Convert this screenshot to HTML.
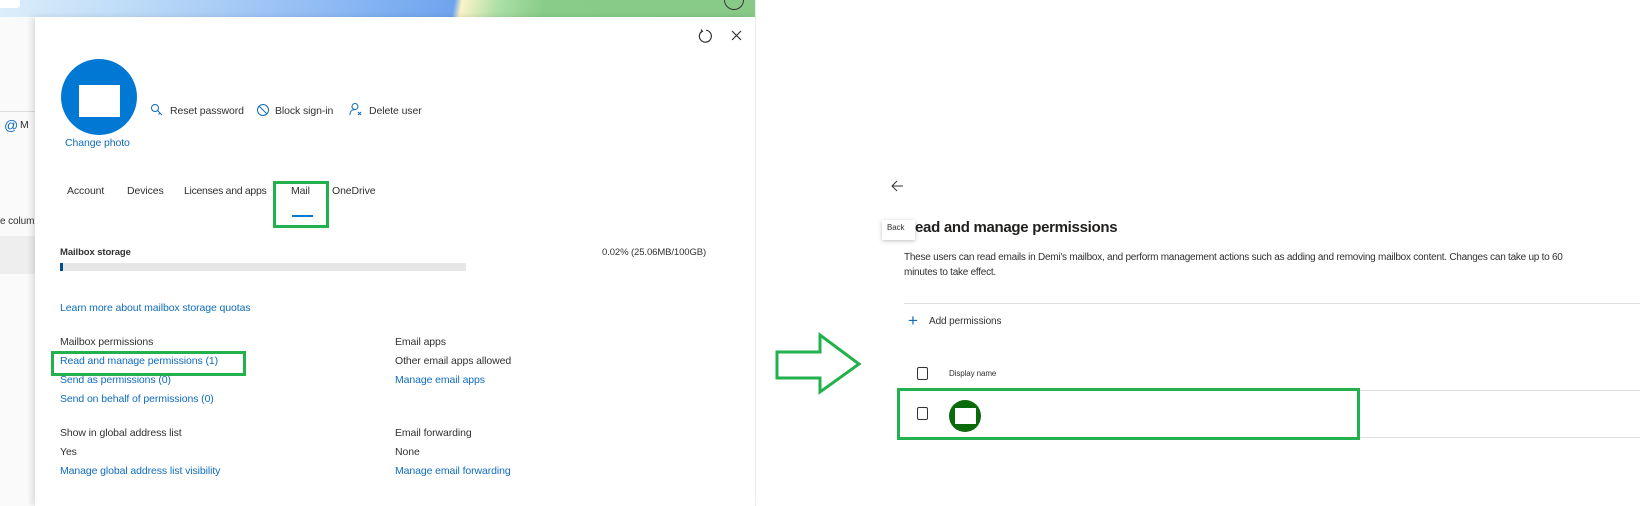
<!DOCTYPE html>
<html><head><meta charset="utf-8"><style>
*{margin:0;padding:0;box-sizing:border-box}
body{width:1640px;height:506px;background:#fff;position:relative;overflow:hidden;font-family:"Liberation Sans",sans-serif;color:#323130;font-size:10.5px;letter-spacing:-0.1px}
.a{position:absolute;white-space:nowrap}
.l{color:#0f6cbd}
.g{border:3px solid #22b14c;position:absolute}
</style></head><body>
<div class="a" style="left:0;top:0;width:755px;height:17px;background:linear-gradient(100deg,#dceefa 0%,#b9d8f7 20%,#8cb8f3 45%,#6ea4ee 60%,#fbf3c8 61%,#aadfa5 66%,#88cc88 72%,#88c988 100%)"></div>
<div class="a" style="left:0;top:0;width:20px;height:8px;background:#fff;border-radius:0 0 3px 0"></div>
<div class="a" style="left:724px;top:0;width:20px;height:10px;border:1px solid #333;border-top:none;border-radius:0 0 10px 10px"></div>
<div class="a" style="left:0;top:17px;width:35px;height:489px;background:#fafafa"></div>
<div class="a" style="left:0;top:111px;width:35px;height:1px;background:#ddd"></div>
<div class="a" style="left:4px;top:117px;font-size:14px;color:#0f6cbd">@</div>
<div class="a" style="left:20px;top:119px">M</div>
<div class="a" style="left:0;top:216px;font-size:10px">e column</div>
<div class="a" style="left:0;top:236px;width:35px;height:38px;background:#eee"></div>
<div class="a" style="left:35px;top:17px;width:720px;height:489px;background:#fff;box-shadow:-3px 0 6px rgba(0,0,0,.12)"></div>
<div class="a" style="left:755px;top:0;width:1px;height:506px;background:#ececec"></div>
<svg class="a" style="left:697px;top:28px" width="16" height="16" viewBox="0 0 16 16"><path d="M5 3.2A6 6 0 1 0 9 2.2" fill="none" stroke="#333" stroke-width="1.2"/><path d="M4 1.5L5.5 3.3 3.5 4.6" fill="none" stroke="#333" stroke-width="1.2"/></svg>
<svg class="a" style="left:731px;top:30px" width="11" height="11"><path d="M1 1L10 10M10 1L1 10" stroke="#333" stroke-width="1.2"/></svg>
<div class="a" style="left:61px;top:59px;width:76px;height:76px;border-radius:50%;background:#0078d4"></div>
<div class="a" style="left:79px;top:85px;width:41px;height:32px;background:#fff"></div>
<div class="a l" style="left:65px;top:137px">Change photo</div>
<svg class="a" style="left:150px;top:103px" width="14" height="14" viewBox="0 0 14 14"><circle cx="5" cy="5" r="3.5" fill="none" stroke="#0f6cbd"/><path d="M7.5 7.5L12 12M10 10l-1.5 1.5" stroke="#0f6cbd"/></svg>
<div class="a" style="left:170px;top:105px">Reset password</div>
<svg class="a" style="left:256px;top:103px" width="14" height="14"><circle cx="7" cy="7" r="5.5" fill="none" stroke="#0f6cbd"/><path d="M3 3L11 11" stroke="#0f6cbd"/></svg>
<div class="a" style="left:275px;top:105px">Block sign-in</div>
<svg class="a" style="left:349px;top:102px" width="16" height="16"><circle cx="6" cy="4.5" r="3" fill="none" stroke="#0f6cbd"/><path d="M1 13c0-4 2.5-5.5 5-5.5" fill="none" stroke="#0f6cbd"/><path d="M9 10l3 3M12 10l-3 3" stroke="#0f6cbd"/></svg>
<div class="a" style="left:369px;top:105px">Delete user</div>
<div class="a" style="left:67px;top:185px">Account</div>
<div class="a" style="left:127px;top:185px">Devices</div>
<div class="a" style="left:184px;top:185px;letter-spacing:-0.3px">Licenses and apps</div>
<div class="a" style="left:291px;top:185px">Mail</div>
<div class="a" style="left:292px;top:215px;width:21px;height:2px;background:#0078d4"></div>
<div class="a" style="left:332px;top:185px">OneDrive</div>
<div class="g" style="left:273px;top:181px;width:56px;height:47px"></div>
<div class="a" style="left:60px;top:247px;font-size:9.5px;font-weight:bold">Mailbox storage</div>
<div class="a" style="left:602px;top:247px;font-size:9.5px">0.02% (25.06MB/100GB)</div>
<div class="a" style="left:60px;top:263px;width:406px;height:8px;background:#e6e6e6"></div>
<div class="a" style="left:60px;top:263px;width:3px;height:8px;background:#004e8c"></div>
<div class="a l" style="left:60px;top:302px">Learn more about mailbox storage quotas</div>
<div class="a" style="left:60px;top:336px">Mailbox permissions</div>
<div class="a l" style="left:60px;top:355px">Read and manage permissions (1)</div>
<div class="g" style="left:51px;top:351px;width:195px;height:25px"></div>
<div class="a l" style="left:60px;top:374px">Send as permissions (0)</div>
<div class="a l" style="left:60px;top:393px">Send on behalf of permissions (0)</div>
<div class="a" style="left:60px;top:427px">Show in global address list</div>
<div class="a" style="left:60px;top:446px">Yes</div>
<div class="a l" style="left:60px;top:465px">Manage global address list visibility</div>
<div class="a" style="left:395px;top:336px">Email apps</div>
<div class="a" style="left:395px;top:355px">Other email apps allowed</div>
<div class="a l" style="left:395px;top:374px">Manage email apps</div>
<div class="a" style="left:395px;top:427px">Email forwarding</div>
<div class="a" style="left:395px;top:446px">None</div>
<div class="a l" style="left:395px;top:465px">Manage email forwarding</div>
<svg class="a" style="left:770px;top:328px" width="100" height="70"><path d="M7 24H50V7L89 36 50 64V50H7Z" fill="none" stroke="#22b14c" stroke-width="3"/></svg>
<svg class="a" style="left:890px;top:179px" width="14" height="14"><path d="M13 7H2M7 2L2 7 7 12" fill="none" stroke="#333" stroke-width="1"/></svg>
<div class="a" style="left:882px;top:220px;width:33px;height:20px;background:#fff;box-shadow:0 1px 4px rgba(0,0,0,.25);font-size:8px;padding:3px 0 0 5px">Back</div>
<div class="a" style="left:915px;top:219px;font-size:15px;font-weight:bold;color:#201f1e;letter-spacing:-0.3px">ead and manage permissions</div>
<div class="a" style="left:904px;top:250px;font-size:10px;line-height:15px;white-space:normal;width:665px;letter-spacing:-0.25px">These users can read emails in Demi's mailbox, and perform management actions such as adding and removing mailbox content. Changes can take up to 60 minutes to take effect.</div>
<div class="a" style="left:904px;top:303px;width:736px;height:1px;background:#e1dfdd"></div>
<div class="a" style="left:908px;top:311px;font-size:17px;color:#0f6cbd;font-weight:lighter">+</div>
<div class="a" style="left:929px;top:316px;font-size:10px">Add permissions</div>
<div class="a" style="left:917px;top:367px;width:11px;height:13px;border:1px solid #333;border-radius:2px"></div>
<div class="a" style="left:949px;top:369px;font-size:8px">Display name</div>
<div class="a" style="left:904px;top:390px;width:736px;height:1px;background:#e1dfdd"></div>
<div class="a" style="left:904px;top:437px;width:736px;height:1px;background:#e1dfdd"></div>
<div class="a" style="left:917px;top:407px;width:11px;height:13px;border:1px solid #333;border-radius:2px"></div>
<div class="a" style="left:949px;top:400px;width:32px;height:32px;border-radius:50%;background:#0b6a0b"></div>
<div class="a" style="left:955px;top:408px;width:21px;height:16px;background:#fff"></div>
<div class="g" style="left:897px;top:388px;width:463px;height:52px"></div>
</body></html>
